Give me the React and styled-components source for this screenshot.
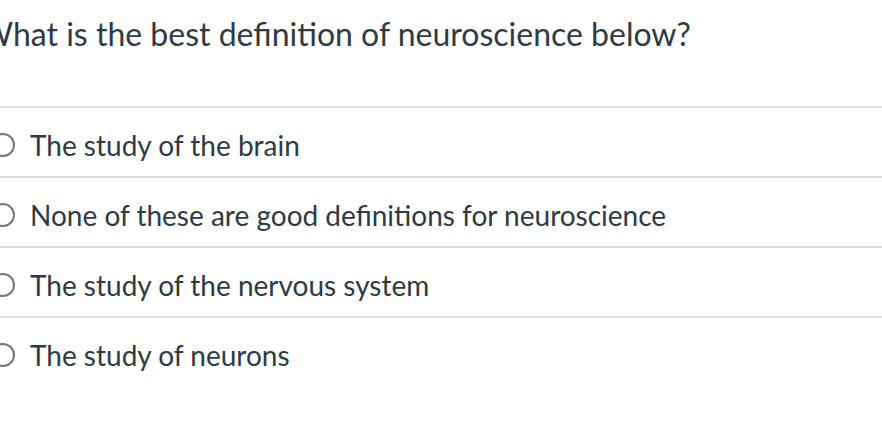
import React from 'react';
import styled, { createGlobalStyle } from 'styled-components';

const GlobalStyle = createGlobalStyle`
  html, body {
    margin: 0;
    padding: 0;
    background: #fff;
  }
  body {
    font-family: Lato, "Open Sans", sans-serif;
    color: #2d3b45;
  }
`

const Page = styled.div`
  width: 882px;
  height: 426px;
  overflow: hidden;
`

const Question = styled.div`
  margin-left: -20px;
  padding-top: 13px;
`

const Title = styled.h1`
  margin: 0 0 51px 0;
  font-size: 32px;
  font-weight: 400;
  line-height: 42px;
`

const Answers = styled.div`
  display: flex;
  flex-direction: column;
`

const Answer = styled.label`
  display: flex;
  align-items: center;
  gap: 15px;
  height: 70px;
  border-top: 2px solid #dddddd;
  box-sizing: border-box;
  padding: 6px 0 0 11px;
  font-size: 28px;
  cursor: pointer;
`

const Radio = styled.span`
  width: 24px;
  height: 24px;
  box-sizing: border-box;
  border: 2px solid #777;
  border-radius: 50%;
  flex-shrink: 0;
`

const answers = [
  'The study of the brain',
  'None of these are good definitions for neuroscience',
  'The study of the nervous system',
  'The study of neurons',
]

const App = () => {
  return (
    <Page>
      <GlobalStyle />
      <Question>
        <Title>What is the best definition of neuroscience below?</Title>
        <Answers>
          { answers.map((a, i) => (
            <Answer key={i}>
              <Radio />
              <span>{a}</span>
            </Answer>
          )) }
        </Answers>
      </Question>
    </Page>
  )
}

export default App
